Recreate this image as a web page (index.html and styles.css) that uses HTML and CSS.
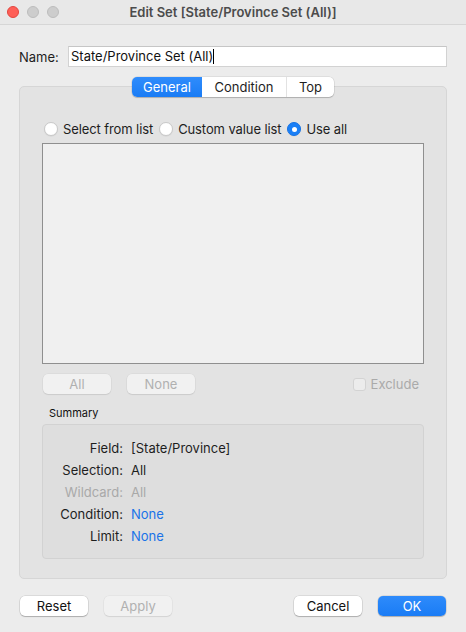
FILE: index.html
```html
<!DOCTYPE html>
<html>
<head>
<meta charset="utf-8">
<link rel="stylesheet" href="styles.css">
</head>
<body>
<div class="window">
  <div class="titlebar">
    <div class="lights">
      <span class="light red"></span>
      <span class="light gray"></span>
      <span class="light gray"></span>
    </div>
    <div class="title">Edit Set [State/Province Set (All)]</div>
  </div>
  <div class="content">
    <div class="name-row">
      <label class="name-label">Name:</label>
      <div class="name-input">State/Province Set (All)<span class="caret"></span></div>
    </div>
    <div class="tabs">
      <span class="tab active">General</span>
      <span class="tab">Condition</span>
      <span class="tab last">Top</span>
    </div>
    <div class="panel">
      <div class="radios">
        <span class="radio"><span class="circle"></span>Select from list</span>
        <span class="radio"><span class="circle"></span>Custom value list</span>
        <span class="radio"><span class="circle on"></span>Use all</span>
      </div>
      <div class="listbox"></div>
      <div class="list-actions">
        <span class="btn small disabled">All</span>
        <span class="btn small disabled">None</span>
        <span class="spacer"></span>
        <span class="check"><span class="box"></span>Exclude</span>
      </div>
      <div class="summary-label">Summary</div>
      <div class="summary">
        <div class="row"><span class="k">Field:</span><span class="v">[State/Province]</span></div>
        <div class="row"><span class="k">Selection:</span><span class="v">All</span></div>
        <div class="row dim"><span class="k">Wildcard:</span><span class="v">All</span></div>
        <div class="row"><span class="k">Condition:</span><span class="v link">None</span></div>
        <div class="row"><span class="k">Limit:</span><span class="v link">None</span></div>
      </div>
    </div>
    <div class="footer">
      <span class="btn">Reset</span>
      <span class="btn disabled">Apply</span>
      <span class="spacer"></span>
      <span class="btn">Cancel</span>
      <span class="btn primary">OK</span>
    </div>
  </div>
</div>
</body>
</html>
```
FILE: styles.css
```css
* { box-sizing: border-box; }
html, body { margin: 0; padding: 0; }
body {
  width: 466px;
  height: 632px;
  background: #ececec;
  font-family: Inter, "Noto Sans", "Liberation Sans", sans-serif;
  font-size: 13px;
  color: #1e1e1e;
  overflow: hidden;
}
.window { width: 466px; height: 632px; display: flex; flex-direction: column; }
.titlebar {
  height: 25px;
  background: #e8e8e8;
  border-bottom: 1px solid #d6d6d6;
  display: flex;
  align-items: center;
  position: relative;
}
.lights { display: flex; gap: 8px; padding-left: 7px; }
.light { width: 12px; height: 12px; border-radius: 50%; display: block; }
.light.red { background: #fe5f57; border: 1px solid #e2463f; }
.light.gray { background: #cdcdcd; border: 1px solid #bdbdbd; }
.title {
  position: absolute; left: 0; right: 0; text-align: center;
  font-weight: 600; color: #4c4c4c; font-size: 13px;
}
.content { padding: 0 19px; display: flex; flex-direction: column; }
.name-row { display: flex; align-items: center; margin-top: 21px; height: 21px; }
.name-label { width: 49px; }
.name-input {
  flex: 1; height: 21px; background: #fff;
  border: 1px solid #d2d2d2; border-top-color: #c6c6c6;
  padding: 0 2px; line-height: 19px; color: #111;
}
.caret { display: inline-block; width: 1px; height: 15px; background: #000; vertical-align: -3px; }
.tabs {
  align-self: center;
  display: flex;
  margin-top: 10px;
  margin-bottom: -11px;
  position: relative; z-index: 1;
  background: #fff;
  border-radius: 5px;
  box-shadow: 0 0 0 0.5px rgba(0,0,0,0.12), 0 1px 1px rgba(0,0,0,0.18);
  height: 20px;
}
.tab {
  height: 20px; line-height: 20px; text-align: center;
  color: #1e1e1e; border-right: 1px solid #e2e2e2;
}
.tab:nth-child(1) { width: 70px; }
.tab:nth-child(2) { width: 85px; }
.tab:nth-child(3) { width: 47px; border-right: none; }
.tab.active {
  background: linear-gradient(#2f8cfc, #1a7cf5); color: #fff;
  border-radius: 5px 0 0 5px; border-right: none;
}
.panel {
  height: 493px;
  background: #e3e3e3;
  border: 1px solid #d6d6d6;
  border-radius: 5px;
  padding: 29px 22px 0 22px;
  display: flex; flex-direction: column;
}
.radios { display: flex; align-items: center; height: 26px; padding-left: 2px; letter-spacing: -0.1px; }
.radio { display: flex; align-items: center; margin-right: 6px; }
.circle {
  width: 14px; height: 14px; border-radius: 50%;
  background: #fff; border: 1px solid #c9c9c9; margin-right: 5px;
  box-shadow: 0 0.5px 1px rgba(0,0,0,0.08);
  position: relative;
}
.circle.on { background: #1a7ff6; border-color: #1473e6; }
.circle.on::after {
  content: ""; position: absolute; left: 3.5px; top: 3.5px;
  width: 5px; height: 5px; border-radius: 50%; background: #fff;
}
.listbox {
  margin-top: 1px;
  height: 221px;
  background: #f0f0f0;
  border: 1px solid #8f8f8f;
}
.list-actions { display: flex; align-items: center; margin-top: 10px; height: 20px; }
.btn {
  display: inline-flex; align-items: center; justify-content: center;
  width: 68px; height: 20px; border-radius: 5px;
  background: #fff; color: #111;
  box-shadow: 0 0 0 0.5px rgba(0,0,0,0.15), 0 1px 1px rgba(0,0,0,0.2);
}
.btn.small { margin-left: 1px; margin-right: 15px; }
.btn.disabled { background: #f1f1f1; color: #b0b0b0; box-shadow: 0 0 0 0.5px rgba(0,0,0,0.06), 0 1px 1px rgba(0,0,0,0.08); }
.spacer { flex: 1; }
.check { display: flex; align-items: center; color: #aaaaaa; margin-right: 5px; }
.box {
  width: 13px; height: 13px; border-radius: 3px;
  background: #ececec; border: 1px solid #d3d3d3; margin-right: 5px;
}
.summary-label { margin-top: 12px; margin-left: 7px; font-size: 11px; height: 14px; line-height: 14px; color: #111; }
.summary {
  margin-top: 4px;
  height: 135px;
  background: #dedede;
  border: 1px solid #d2d2d2;
  border-radius: 4px;
  padding-top: 12px;
}
.row { display: flex; height: 22px; line-height: 22px; }
.row .k { width: 80px; text-align: right; }
.row .v { margin-left: 8px; }
.row.dim { color: #a9a9a9; }
.v.link { color: #1a73e8; }
.footer { display: flex; align-items: center; margin-top: 17px; padding: 0 1px; }
.footer .btn { margin-right: 16px; }
.footer .btn:last-child { margin-right: 0; }
.btn.primary { background: linear-gradient(#2e8bfb, #1a7cf5); color: #fff; }
```
